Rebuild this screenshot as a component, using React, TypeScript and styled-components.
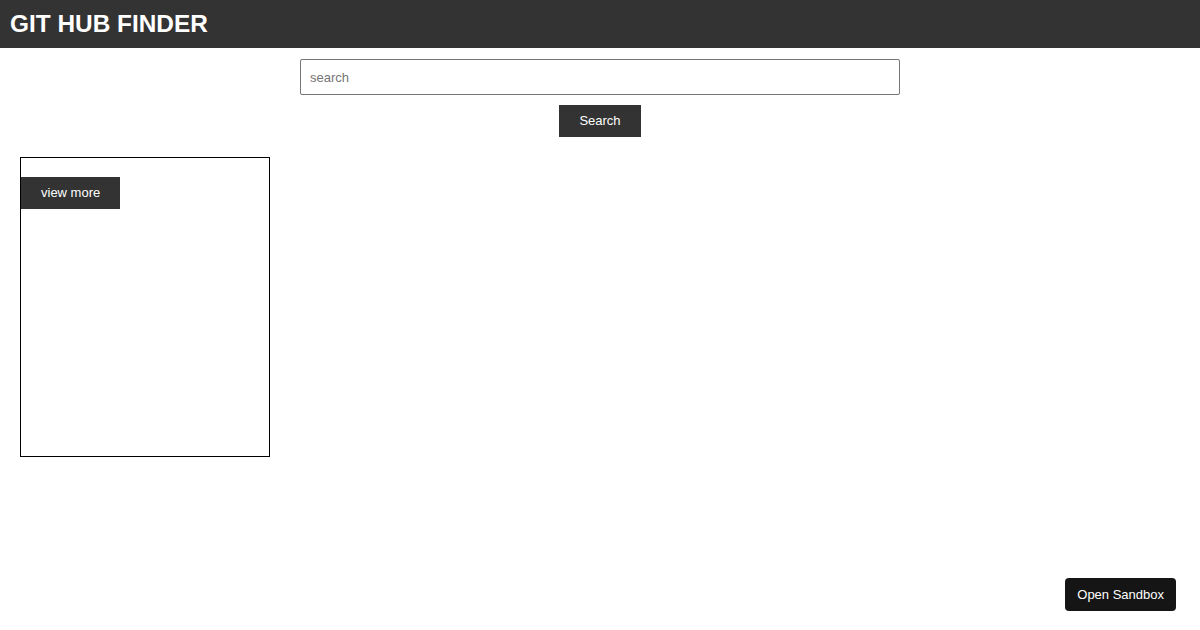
import React from 'react';
import styled, { createGlobalStyle } from 'styled-components';

const GlobalStyle = createGlobalStyle`
	body {
		margin: 0;
		background: #ffffff;
		font-family: 'Liberation Sans', Arial, sans-serif;
	}
`;

const Header = styled.header`
	height: 48px;
	background: #333333;
	display: flex;
	align-items: center;
	padding: 0 10px;
`;

const Title = styled.h1`
	margin: 0;
	color: #ffffff;
	font-size: 24.4px;
	font-weight: 700;
`;

const SearchForm = styled.form`
	display: flex;
	flex-direction: column;
	align-items: center;
	gap: 10px;
	padding-top: 11px;
`;

const SearchInput = styled.input`
	box-sizing: border-box;
	width: 600px;
	height: 36px;
	border: 1px solid #767676;
	border-radius: 2px;
	padding: 0 9px;
	font-family: 'Liberation Sans', Arial, sans-serif;
	font-size: 13px;
	outline: none;
	&::placeholder {
		color: #757575;
	}
`;

const DarkButton = styled.button`
	height: 32px;
	padding: 0 20px 1px;
	border: none;
	background: #333333;
	color: #ffffff;
	font-family: 'Liberation Sans', Arial, sans-serif;
	font-size: 13px;
	cursor: pointer;
`;

const Results = styled.div`
	display: flex;
	flex-wrap: wrap;
	gap: 20px;
	padding: 20px 20px 0;
`;

const Card = styled.div`
	box-sizing: border-box;
	width: 250px;
	height: 300px;
	border: 1px solid #000000;
	padding-top: 19px;
`;

const SandboxButton = styled.button`
	position: fixed;
	right: 24px;
	bottom: 19px;
	height: 33px;
	padding: 0 12px;
	border: none;
	border-radius: 4px;
	background: #151515;
	color: #ffffff;
	font-family: 'Liberation Sans', Arial, sans-serif;
	font-size: 13px;
`;

export default function App() {
	return (
		<>
			<GlobalStyle />
			<Header>
				<Title>GIT HUB FINDER</Title>
			</Header>
			<SearchForm onSubmit={(e) => e.preventDefault()}>
				<SearchInput placeholder="search" />
				<DarkButton type="submit">Search</DarkButton>
			</SearchForm>
			<Results>
				<Card>
					<DarkButton>view more</DarkButton>
				</Card>
			</Results>
			<SandboxButton>Open Sandbox</SandboxButton>
		</>
	);
}
